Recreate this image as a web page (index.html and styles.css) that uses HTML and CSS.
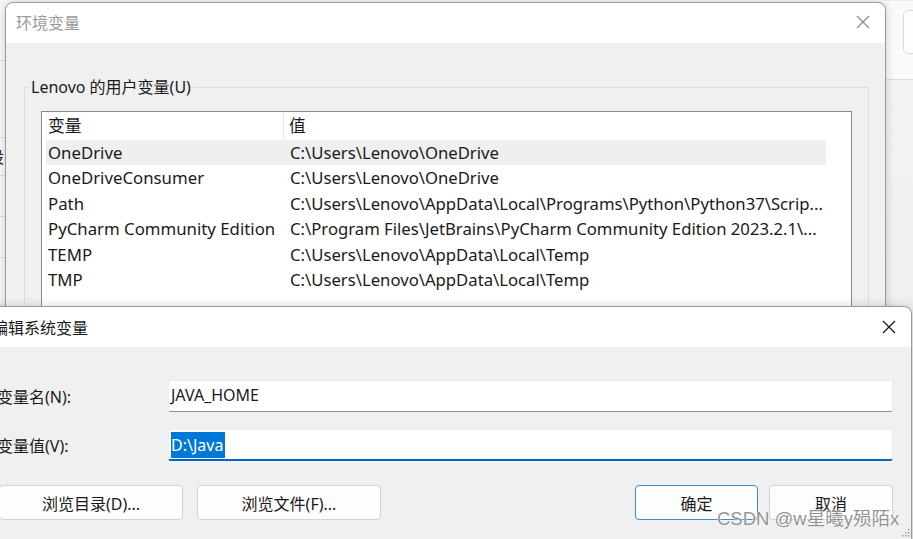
FILE: index.html
```html
<!DOCTYPE html>
<html lang="zh-CN">
<head>
    <meta charset="UTF-8">
    <title>环境变量</title>
    <link rel="stylesheet" href="styles.css">
</head>
<body>
<div class="desktop">
    <div class="back-sheet">
        <div class="sheet-row tall"></div>
        <div class="sheet-row sheet-char">设</div>
        <div class="sheet-row"></div>
        <div class="sheet-row"></div>
        <div class="sheet-row"></div>
    </div>
    <div class="back-panel">
        <div class="panel-btn"></div>
    </div>

    <section class="window env-window">
        <header class="titlebar">
            <span class="title inactive">环境变量</span>
            <svg class="close" width="14" height="14" viewBox="0 0 14 14"><path d="M1 1L13 13M13 1L1 13" stroke="#8c8c8c" stroke-width="1.3" fill="none"/></svg>
        </header>
        <div class="window-body">
            <fieldset class="group">
                <legend>Lenovo 的用户变量(U)</legend>
                <div class="listview">
                    <div class="lv-row lv-head">
                        <span class="col-name">变量</span>
                        <span class="col-value">值</span>
                    </div>
                    <div class="lv-row selected">
                        <span class="col-name">OneDrive</span>
                        <span class="col-value">C:\Users\Lenovo\OneDrive</span>
                    </div>
                    <div class="lv-row">
                        <span class="col-name">OneDriveConsumer</span>
                        <span class="col-value">C:\Users\Lenovo\OneDrive</span>
                    </div>
                    <div class="lv-row">
                        <span class="col-name">Path</span>
                        <span class="col-value">C:\Users\Lenovo\AppData\Local\Programs\Python\Python37\Scrip...</span>
                    </div>
                    <div class="lv-row">
                        <span class="col-name">PyCharm Community Edition</span>
                        <span class="col-value">C:\Program Files\JetBrains\PyCharm Community Edition 2023.2.1\...</span>
                    </div>
                    <div class="lv-row">
                        <span class="col-name">TEMP</span>
                        <span class="col-value">C:\Users\Lenovo\AppData\Local\Temp</span>
                    </div>
                    <div class="lv-row">
                        <span class="col-name">TMP</span>
                        <span class="col-value">C:\Users\Lenovo\AppData\Local\Temp</span>
                    </div>
                </div>
            </fieldset>
        </div>
    </section>

    <section class="window edit-window">
        <header class="titlebar">
            <span class="title">编辑系统变量</span>
            <svg class="close" width="14" height="14" viewBox="0 0 14 14"><path d="M1 1L13 13M13 1L1 13" stroke="#1a1a1a" stroke-width="1.3" fill="none"/></svg>
        </header>
        <div class="window-body edit-body">
            <div class="field">
                <label class="field-label">变量名(N):</label>
                <div class="textbox">JAVA_HOME</div>
            </div>
            <div class="field">
                <label class="field-label">变量值(V):</label>
                <div class="textbox focused"><span class="selection">D:\Java</span></div>
            </div>
            <div class="button-row">
                <button class="btn wide">浏览目录(D)...</button>
                <button class="btn wide">浏览文件(F)...</button>
                <span class="spacer"></span>
                <button class="btn default">确定</button>
                <button class="btn">取消</button>
            </div>
        </div>
        <svg class="grip" width="12" height="12" viewBox="0 0 12 12">
            <g fill="#9a9a9a">
                <rect x="9" y="3" width="1.5" height="1.5"/>
                <rect x="6" y="6" width="1.5" height="1.5"/>
                <rect x="9" y="6" width="1.5" height="1.5"/>
                <rect x="3" y="9" width="1.5" height="1.5"/>
                <rect x="6" y="9" width="1.5" height="1.5"/>
                <rect x="9" y="9" width="1.5" height="1.5"/>
            </g>
        </svg>
    </section>

    <div class="watermark">CSDN @w星曦y殒陌x</div>
</div>
</body>
</html>
```

FILE: styles.css
```css
:root {
    --face: #f0f0f0;
    --text: #1a1a1a;
    --accent: #0067c0;
    --select: #0078d7;
}
body {
    margin: 0;
    font-family: "Noto Sans", "Noto Sans CJK SC", sans-serif;
    color: var(--text);
}
.desktop {
    position: relative;
    width: 913px;
    height: 539px;
    overflow: hidden;
    background: #f9f9f9;
}
/* windows behind the dialogs */
.back-sheet {
    position: absolute;
    left: -60px;
    top: 60px;
    width: 66px;
    border-right: 1px solid #e2e2e2;
}
.sheet-row {
    height: 40px;
    border-top: 1px solid #dedede;
    font-size: 16px;
    line-height: 38px;
    text-align: right;
    padding-right: 2px;
}
.sheet-row.tall {
    height: 76px;
}
.sheet-row.sheet-char {
    height: 37px;
}
.back-panel {
    position: absolute;
    left: 886px;
    top: 0;
    width: 40px;
    height: 539px;
    background: linear-gradient(#fafafa 78px, #f3f3f3 79px, #ececec);
    border-top: 1px solid transparent;
}
.panel-btn {
    margin: 9px 0 0 17px;
    height: 42px;
    border: 1px solid #d8d8d8;
    border-radius: 5px;
    background: #fdfdfd;
}
.back-panel::after {
    content: "";
    display: block;
    margin-top: 25px;
    border-top: 1px solid #dcdcdc;
}
/* windows */
.window {
    position: absolute;
    box-sizing: border-box;
    border: 1px solid #9a9a9a;
    border-radius: 8px 8px 0 0;
    background: var(--face);
    box-shadow: 0 0 10px rgba(0, 0, 0, 0.18);
}
.titlebar {
    box-sizing: border-box;
    height: 40px;
    background: #ffffff;
    border-radius: 8px 8px 0 0;
    display: flex;
    align-items: center;
    justify-content: space-between;
    font-size: 16px;
}
.title.inactive {
    color: #9a9a9a;
}
.env-window {
    left: 5px;
    top: 2px;
    width: 881px;
    height: 420px;
}
.env-window .titlebar {
    padding: 0 15px 3px 10px;
}
.group {
    margin: 33px 16px 0 18px;
    padding: 13px 16px 16px 16px;
    border: 1px solid #dcdcdc;
}
.group legend {
    margin-left: -12px;
    padding: 0 2px;
    font-size: 16px;
    line-height: 22px;
}
.listview {
    height: 230px;
    border: 1px solid #848a94;
    background: #ffffff;
    font-size: 16.8px;
}
.lv-row {
    display: flex;
    width: 780px;
    margin-left: 4px;
    height: 25.4px;
    line-height: 25.4px;
    white-space: nowrap;
}
.lv-head {
    height: 28px;
    line-height: 28px;
}
.lv-row.selected {
    background: #efefef;
}
.col-name {
    width: 236px;
    padding-left: 2px;
    flex: none;
}
.lv-head .col-name {
    border-right: 1px solid #e5e5e5;
    width: 235px;
}
.col-value {
    padding-left: 6px;
    font-size: 16.7px;
}
.lv-head .col-value {
    padding-left: 5px;
}
/* edit dialog */
.edit-window {
    left: -30px;
    top: 306px;
    width: 942px;
    height: 260px;
}
.edit-window .titlebar {
    padding: 0 15px 0 21px;
}
.edit-body {
    padding: 33px 18px 0 26px;
    font-size: 16px;
}
.field {
    display: flex;
    align-items: center;
    margin-bottom: 17px;
}
.field-label {
    width: 171px;
    flex: none;
}
.textbox {
    flex: 1;
    box-sizing: border-box;
    height: 32px;
    line-height: 28px;
    padding: 0 2px;
    background: #ffffff;
    border: 1px solid #ececec;
    border-bottom: 1px solid #8d8d8d;
    border-radius: 3px;
}
.textbox.focused {
    border-bottom: 2px solid var(--accent);
    padding-top: 2px;
}
.selection {
    display: inline-block;
    height: 26px;
    line-height: 26px;
    padding-right: 2px;
    background: var(--select);
    color: #ffffff;
    vertical-align: top;
}
.button-row {
    display: flex;
    margin: 24px 0 0 2px;
}
.btn {
    height: 35px;
    width: 124px;
    margin-left: 11px;
    padding: 0;
    font: inherit;
    font-size: 16px;
    color: var(--text);
    background: #fdfdfd;
    border: 1px solid #d3d3d3;
    border-radius: 4px;
}
.btn.wide {
    width: 184px;
    margin-left: 0;
    margin-right: 14px;
}
.btn.default {
    width: 123px;
    border-color: #3b8ad6;
}
.spacer {
    flex: 1;
}
.grip {
    position: absolute;
    right: 0;
    top: 219px;
}
.watermark {
    position: absolute;
    left: 717px;
    top: 504px;
    font-family: "Liberation Sans", "Noto Sans CJK SC", sans-serif;
    font-size: 18.5px;
    color: rgba(110, 110, 110, 0.75);
    text-shadow: 0 0 2px #ffffff, 0 0 1px #ffffff;
    white-space: nowrap;
}
```
